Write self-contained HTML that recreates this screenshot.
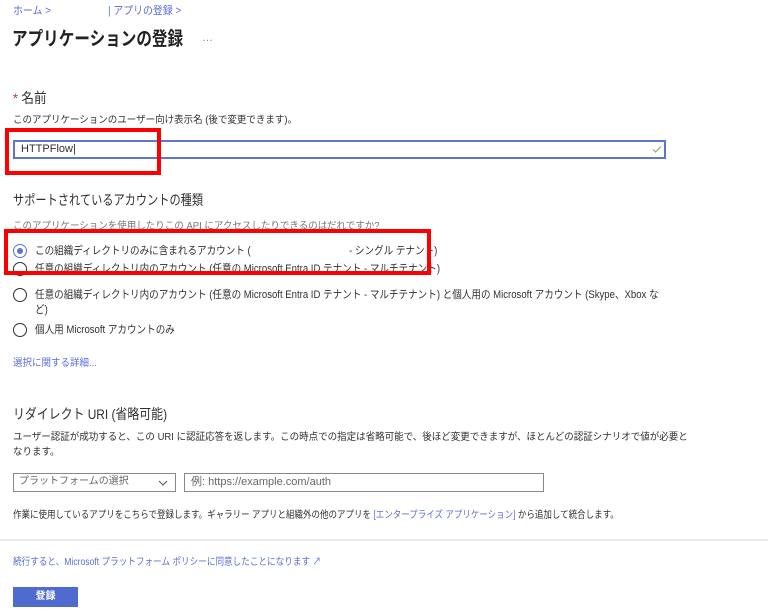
<!DOCTYPE html>
<html><head><meta charset="utf-8"><style>
*{margin:0;padding:0;box-sizing:border-box}
body{width:768px;height:613px;background:#fff;position:relative;overflow:hidden;font-family:"Liberation Sans","Noto Sans CJK JP",sans-serif;color:#323130;font-size:11px}
.a{position:absolute;white-space:nowrap;line-height:1;transform-origin:0 0}
.link{color:#5a6fd6}
.radio{position:absolute;left:13px;width:14px;height:14px;border:1px solid #323130;border-radius:50%;background:#fff}
.red{position:absolute;border:4px solid #f00}
</style></head><body>
<div class="a link" style="left:13px;top:6px;font-size:11px;transform:scaleX(.9)">ホーム &gt;</div>
<div class="a link" style="left:108px;top:6px;font-size:11px;transform:scaleX(.9)">| アプリの登録 &gt;</div>
<div class="a" style="left:12px;top:30px;font-size:19px;font-weight:bold;color:#222;transform:scaleX(.82)">アプリケーションの登録</div>
<div class="a" style="left:202px;top:33px;font-size:11px;color:#888">…</div>

<div class="a" style="left:13px;top:91px;font-size:14px;transform:scaleX(.9)"><span style="color:#c33">*</span> 名前</div>
<div class="a" style="left:13px;top:116px;font-size:10px;transform:scaleX(.95)">このアプリケーションのユーザー向け表示名 (後で変更できます)。</div>
<div class="a" style="left:13px;top:140px;width:653px;height:19px;border:2px solid #5a74d8"></div>
<div class="a" style="left:21px;top:144px;font-size:11px">HTTPFlow|</div>
<svg class="a" style="left:651px;top:143px" width="12" height="12" viewBox="0 0 12 12"><path d="M2 6.5l2.5 2.5L10 3.5" fill="none" stroke="#7cb36b" stroke-width="1.2"/></svg>
<div class="red" style="left:5px;top:128px;width:156px;height:47px"></div>

<div class="a" style="left:13px;top:193px;font-size:14px;transform:scaleX(.8)">サポートされているアカウントの種類</div>
<div class="a" style="left:13px;top:222px;font-size:10px;color:#777;transform:scaleX(.95)">このアプリケーションを使用したりこの API にアクセスしたりできるのはだれですか?</div>
<div class="radio" style="top:244px;border-color:#5a74d8"><div style="position:absolute;left:3px;top:3px;width:6px;height:6px;border-radius:50%;background:#5a74d8"></div></div>
<div class="a" style="left:35px;top:246px;transform:scaleX(.87)">この組織ディレクトリのみに含まれるアカウント (　　　　　　　　　　 - シングル テナント)</div>
<div class="radio" style="top:262px"></div>
<div class="a" style="left:35px;top:264px;transform:scaleX(.87)">任意の組織ディレクトリ内のアカウント (任意の Microsoft Entra ID テナント - マルチテナント)</div>
<div class="radio" style="top:288px"></div>
<div class="a" style="left:35px;top:290px;transform:scaleX(.87)">任意の組織ディレクトリ内のアカウント (任意の Microsoft Entra ID テナント - マルチテナント) と個人用の Microsoft アカウント (Skype、Xbox な</div>
<div class="a" style="left:35px;top:305px;transform:scaleX(.87)">ど)</div>
<div class="radio" style="top:323px"></div>
<div class="a" style="left:35px;top:325px;transform:scaleX(.87)">個人用 Microsoft アカウントのみ</div>
<div class="red" style="left:4px;top:229px;width:427px;height:46px"></div>

<div class="a link" style="left:13px;top:359px;font-size:10px;transform:scaleX(.95)">選択に関する詳細...</div>

<div class="a" style="left:13px;top:407px;font-size:14px;transform:scaleX(.85)">リダイレクト URI (省略可能)</div>
<div class="a" style="left:13px;top:433px;font-size:10px;transform:scaleX(.95)">ユーザー認証が成功すると、この URI に認証応答を返します。この時点での指定は省略可能で、後ほど変更できますが、ほとんどの認証シナリオで値が必要と</div>
<div class="a" style="left:13px;top:448px;font-size:10px;transform:scaleX(.95)">なります。</div>
<div class="a" style="left:13px;top:473px;width:163px;height:19px;border:1px solid #8a8886"></div>
<div class="a" style="left:19px;top:477px;font-size:10px;color:#666">プラットフォームの選択</div>
<svg class="a" style="left:157px;top:477px" width="12" height="12" viewBox="0 0 12 12"><path d="M2 4l4 4 4-4" fill="none" stroke="#555" stroke-width="1"/></svg>
<div class="a" style="left:184px;top:473px;width:360px;height:19px;border:1px solid #8a8886"></div>
<div class="a" style="left:191px;top:477px;font-size:11px;color:#666">例: https://example.com/auth</div>
<div class="a" style="left:13px;top:511px;font-size:10px;transform:scaleX(.85)">作業に使用しているアプリをこちらで登録します。ギャラリー アプリと組織外の他のアプリを <span class="link">[エンタープライズ アプリケーション]</span> から追加して統合します。</div>
<div class="a" style="left:0;top:539px;width:768px;height:2px;background:#edebe9"></div>
<div class="a link" style="left:13px;top:558px;font-size:10px;transform:scaleX(.86)">続行すると、Microsoft プラットフォーム ポリシーに同意したことになります ↗</div>
<div class="a" style="left:13px;top:587px;width:65px;height:20px;background:#4f6bd0;color:#fff;font-size:10px;font-weight:bold;text-align:center;line-height:20px">登録</div>
</body></html>
